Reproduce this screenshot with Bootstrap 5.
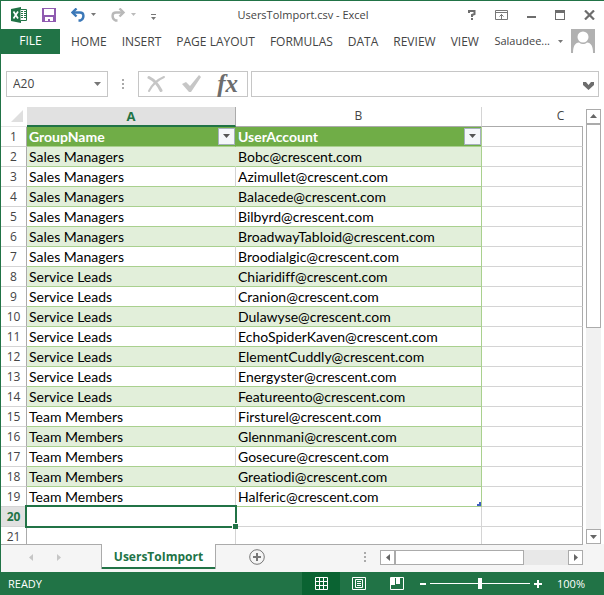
<!DOCTYPE html>
<html lang="en">
<head>
<meta charset="utf-8">
<meta name="viewport" content="width=device-width, initial-scale=1">
<title>UsersToImport.csv - Excel</title>
<link href="https://cdn.jsdelivr.net/npm/bootstrap@5.3.0/dist/css/bootstrap.min.css" rel="stylesheet">
<style>
:root { --xl: #217346; --line: #d4d4d4; --edge: #ababab; --ink: #444; --ui: "Open Sans", "Noto Sans", sans-serif; }
body { font-family: var(--ui); font-size: 12px; line-height: 16px; color: var(--ink); background: #fff; }
svg { display: block; flex: none; }
button { border: 0; padding: 0; background: transparent; color: inherit; font: inherit; }
.app { min-height: 100vh; height: 100vh; border-top: 1px solid var(--xl); border-left: 1px solid var(--xl); }
.titlebar { height: 28px; padding: 0 9px 0 10px; }
.titlebar .side { flex: 1 1 0; gap: 15px; }
.titlebar .window-tools { gap: 19px; }
.doc-title { font-size: 11px; padding-top: 1px; }
.menubar { height: 25px; padding-right: 9px; white-space: nowrap; }
.menubar a { color: var(--ink); text-decoration: none; }
.menubar .file { background: var(--xl); color: #fff; width: 59px; height: 25px; }
.menus { gap: 15px; padding: 1px 0 0 11px; }
.account { font-size: 11px; gap: 8px; }
.formula { height: 26px; margin: 17px 5px 10px; }
.boxed { border: 1px solid #c6c6c6; height: 26px; }
.name-box { width: 102px; padding-right: 6px; }
.name-box input { width: 80px; border: 0; padding: 0 0 0 6px; outline: 0; color: var(--ink); font-size: 12px; }
.fx-box { width: 110px; padding: 0 9px 0 8px; }
.fx-sign { font: italic 700 25px/22px "Liberation Serif", serif; color: #6d6d6d; }
.bar-box { margin-left: 3px; }
.bar-box input { border: 0; outline: 0; min-width: 0; }
.grip { width: 30px; }
.sheet-area { min-height: 0; }
.grid-wrap { overflow: hidden; min-width: 0; }
.sheet { table-layout: fixed; width: 100%; border-collapse: separate; border-spacing: 0; }
.sheet th, .sheet td { height: 20px; padding: 1px 2px 0; line-height: 18px; white-space: nowrap; font-weight: 400; border-right: 1px solid var(--line); border-bottom: 1px solid var(--line); }
.sheet .c-num { width: 26px; } .sheet .c-a { width: 209px; } .sheet .c-b { width: 246px; }
.sheet thead th { text-align: center; font-size: 12px; padding: 0; border-bottom-color: var(--edge); }
.sheet thead th:first-child { border-right: 0; border-bottom-color: #e6e6e6; }
.sheet thead .picked { background: #e1e1e1; color: var(--xl); font-weight: 700; font-size: 13px; border-bottom: 2px solid var(--xl); border-right-color: var(--edge); }
.sheet thead th:last-child { border-right: 0; padding-left: 56px; }
.sheet tbody th { text-align: center; border-right-color: var(--edge); padding: 1px 0 0; }
.sheet tbody td { font-family: Lato, "Open Sans", sans-serif; font-size: 14px; font-variant-ligatures: none; color: #000; }
.sheet tbody td:last-child { border-right-color: var(--edge); }
.listed td:nth-child(2), .listed td:nth-child(3) { border-bottom-color: #a9d08e; }
.listed td:nth-child(3) { border-right-color: #a9d08e; }
.listed:nth-child(even) td:nth-child(2), .listed:nth-child(even) td:nth-child(3) { background: #e2efda; }
.listed:nth-child(even) td:nth-child(2) { border-right-color: #e2efda; }
.sheet .listed.heads td:nth-child(2), .sheet .listed.heads td:nth-child(3) { background: #70ad47; color: #fff; font-weight: 700; padding-right: 0; }
.sheet .listed.heads td:nth-child(2) { border-right-color: #70ad47; }
.drop { width: 17px; height: 17px; border: 1px solid #a6b0bd; background: #f5f7fa; margin-bottom: 1px; }
.sheet .active-row th { background: #e1e1e1; color: var(--xl); font-weight: 700; }
.cell-cursor { position: absolute; inset: -2px -2px -2px -2px; border: 2px solid var(--xl); }
.cell-cursor::after { content: ""; position: absolute; right: -3px; bottom: -3px; width: 6px; height: 6px; background: var(--xl); border: solid #fff; border-width: 1px 0 0 1px; }
.table-end { position: absolute; right: 0; bottom: 0; }
.vscroll { width: 15px; margin: 2px 3px 0 3px; background: #f1f1f1; }
.sbtn { width: 15px; height: 15px; border: 1px solid var(--edge); background: #fff; display: flex; align-items: center; justify-content: center; flex: none; }
.vthumb { height: 47%; border: 1px solid var(--edge); background: #fff; }
.sheetbar { height: 28px; background: #f5f5f5; }
.sheetbar .lined { border-top: 1px solid var(--edge); margin-right: 21px; }
.sheet-nav { width: 100px; gap: 24px; padding: 0 40px 0 0; }
.sheet-tab { margin-top: -1px; width: 115px; height: 25px; background: #fff; border: solid var(--edge); border-width: 0 1px; color: var(--xl); font-weight: 700; box-shadow: inset 0 -2px var(--xl); }
.add-sheet { margin-left: 33px; }
.hscroll { width: 203px; height: 15px; background: #e8e8e8; margin-left: 14px; }
.hthumb { width: 129px; border: 1px solid var(--edge); background: #fff; }
.status { height: 23px; background: var(--xl); color: #fff; font-size: 11px; padding: 0 19px 0 7px; }
.view-btn { width: 38px; height: 23px; display: flex; align-items: center; justify-content: center; }
.view-btn.on { background: #0a6332; }
.zoom-range { appearance: none; -webkit-appearance: none; width: 100px; height: 13px; background: linear-gradient(#fff, #fff) center / 100% 1px no-repeat; margin: 0 4px; }
.zoom-range::-webkit-slider-thumb { -webkit-appearance: none; width: 4px; height: 11px; background: #fff; border-radius: 0; }
.zoom-value { margin-left: 15px; }
</style>
<script src="https://cdn.jsdelivr.net/npm/bootstrap@5.3.0/dist/js/bootstrap.bundle.min.js"></script>
</head>
<body>
<div class="app d-flex flex-column">
  <header class="titlebar d-flex align-items-center">
    <div class="side d-flex align-items-center">
      <svg width="16" height="16" viewBox="0 0 16 16"><path fill="#217346" d="M0 2l10-2v16L0 14z"/><path fill="#fff" stroke="#217346" d="M9.500 2.500h6v11h-6"/><path stroke="#217346" d="M10 4.500h2m1 0h2M10 6.500h2m1 0h2M10 8.500h2m1 0h2M10 10.500h2m1 0h2"/><path stroke="#fff" stroke-width="1.700" d="M2.500 4.500l4.500 7M7 4.500l-4.500 7"/></svg>
      <button aria-label="Save"><svg width="14" height="14" viewBox="0 0 14 14"><path fill="#8f5bb0" fill-rule="evenodd" d="M0 0h14v14H0zM2 1v6h10V1zM3 9v4h3v-2h2v2h3V9z"/></svg></button>
      <button aria-label="Undo"><svg width="25" height="14" viewBox="0 0 25 14" fill="none"><path stroke="#3b78b8" stroke-width="2.400" d="M1.500 4.500h7.500c4.500 0 4.500 6 .5 8H7.500"/><path stroke="#3b78b8" stroke-width="2.400" d="M5.500 .5l-4 4 4 4"/><path fill="#777" d="M20 5h5l-2.500 3z"/></svg></button>
      <button aria-label="Redo"><svg width="25" height="14" viewBox="0 0 25 14" fill="none"><path stroke="#b9b9b9" stroke-width="2.400" d="M12.500 4.500H5c-4.500 0-4.500 6-.5 8H6.500"/><path stroke="#b9b9b9" stroke-width="2.400" d="M8.500 .5l4 4-4 4"/><path fill="#bbb" d="M20 5h5l-2.500 3z"/></svg></button>
      <button class="pt-1" aria-label="Customize toolbar"><svg width="5" height="6" viewBox="0 0 5 6"><path fill="#777" d="M0 0h5v1H0zM0 3h5L2.500 6z"/></svg></button>
    </div>
    <div class="doc-title">UsersToImport.csv - Excel</div>
    <div class="side window-tools d-flex align-items-center justify-content-end">
      <button aria-label="Help"><svg width="8" height="10" viewBox="0 0 8 10" fill="none"><path stroke="#6d6d6d" stroke-width="2" d="M1 3V1h5.500v3L4 5v2"/><path fill="#6d6d6d" d="M3 8h2v2H3z"/></svg></button>
      <button aria-label="Ribbon display options"><svg width="13" height="10" viewBox="0 0 13 10" fill="none" stroke="#777"><path d="M.5 .5h12v9H.5zM1 2.500h11M6.500 9V4M4.500 6.500l2-2 2 2"/></svg></button>
      <button aria-label="Minimize"><svg width="9" height="10" viewBox="0 0 9 10"><path fill="#6d6d6d" d="M0 6h9v2H0z"/></svg></button>
      <button aria-label="Maximize"><svg width="10" height="10" viewBox="0 0 10 10"><path fill="#6d6d6d" fill-rule="evenodd" d="M0 0h10v10H0zM1 3v6h8V3z"/></svg></button>
      <button aria-label="Close"><svg width="11" height="10" viewBox="0 0 11 10"><path stroke="#6d6d6d" stroke-width="2.200" d="M1 .5l9 9M10 .5l-9 9"/></svg></button>
    </div>
  </header>

  <nav class="menubar d-flex align-items-center">
    <a class="file d-flex align-items-center justify-content-center" href="#">FILE</a>
    <div class="menus d-flex">
      <a href="#">HOME</a><a href="#">INSERT</a><a href="#">PAGE LAYOUT</a><a href="#">FORMULAS</a><a href="#">DATA</a><a href="#">REVIEW</a><a href="#">VIEW</a>
    </div>
    <a class="account d-flex align-items-center ms-auto" href="#">Salaudee...
      <svg width="5" height="3" viewBox="0 0 5 3"><path fill="#777" d="M0 0h5L2.500 3z"/></svg>
      <svg width="24" height="24" viewBox="0 0 24 24"><path fill="#b1b1b1" d="M0 0h24v24H0z"/><circle cx="12" cy="8" r="5.500" fill="#fff"/><path fill="#fff" d="M2 24c0-7 2-10 6-10.500 2.500 2 5.500 2 8 0 4 .5 6 3.500 6 10.500z"/></svg>
    </a>
  </nav>

  <div class="formula d-flex align-items-center">
    <div class="name-box boxed d-flex align-items-center justify-content-between">
      <input type="text" value="A20" aria-label="Name box">
      <button aria-label="Name list"><svg width="7" height="4" viewBox="0 0 7 4"><path fill="#777" d="M0 0h7L3.500 4z"/></svg></button>
    </div>
    <div class="grip d-flex justify-content-center"><svg width="2" height="10" viewBox="0 0 2 10"><path fill="#aaa" d="M0 0h2v2H0zM0 4h2v2H0zM0 8h2v2H0z"/></svg></div>
    <div class="fx-box boxed d-flex align-items-center justify-content-between">
      <button aria-label="Cancel"><svg width="19" height="18" viewBox="0 0 19 18" fill="none" stroke="#c6c6c6" stroke-linecap="round"><path stroke-width="3" d="M2 2.500c6 3 9 7 12 13"/><path stroke-width="2" d="M17 2C10 5 5 10 2 16"/></svg></button>
      <button aria-label="Enter"><svg width="20" height="17" viewBox="0 0 20 17"><path fill="#c6c6c6" d="M0 9l4-2 4 4L17 0l2 2L9 17H7z"/></svg></button>
      <button class="fx-sign" aria-label="Insert function">fx</button>
    </div>
    <div class="bar-box boxed d-flex align-items-center flex-fill pe-1">
      <input class="flex-fill" type="text" aria-label="Formula">
      <button class="pt-1" aria-label="Expand formula bar"><svg width="11" height="8" viewBox="0 0 11 8"><path fill="#6d6d6d" d="M0 0h3l2.500 3L8 0h3v3L5.500 8 0 3z"/></svg></button>
    </div>
  </div>

  <main class="sheet-area d-flex flex-fill">
    <div class="grid-wrap flex-fill">
      <table class="sheet">
        <colgroup><col class="c-num"><col class="c-a"><col class="c-b"><col></colgroup>
        <thead><tr>
          <th aria-label="Select all"><svg class="ms-auto me-1" width="12" height="12" viewBox="0 0 12 12"><path fill="#dfdfdf" d="M12 0v12H0z"/></svg></th>
          <th class="picked">A</th><th>B</th><th>C</th>
        </tr></thead>
        <tbody>
          <tr class="listed heads"><th>1</th>
            <td><div class="d-flex justify-content-between align-items-center">GroupName<button class="drop d-flex align-items-center justify-content-center" aria-label="Filter GroupName"><svg width="7" height="4" viewBox="0 0 7 4"><path fill="#555" d="M0 0h7L3.500 4z"/></svg></button></div></td>
            <td><div class="d-flex justify-content-between align-items-center">UserAccount<button class="drop d-flex align-items-center justify-content-center" aria-label="Filter UserAccount"><svg width="7" height="4" viewBox="0 0 7 4"><path fill="#555" d="M0 0h7L3.500 4z"/></svg></button></div></td><td></td></tr>
          <tr class="listed"><th>2</th><td>Sales Managers</td><td>Bobc@crescent.com</td><td></td></tr>
          <tr class="listed"><th>3</th><td>Sales Managers</td><td>Azimullet@crescent.com</td><td></td></tr>
          <tr class="listed"><th>4</th><td>Sales Managers</td><td>Balacede@crescent.com</td><td></td></tr>
          <tr class="listed"><th>5</th><td>Sales Managers</td><td>Bilbyrd@crescent.com</td><td></td></tr>
          <tr class="listed"><th>6</th><td>Sales Managers</td><td>BroadwayTabloid@crescent.com</td><td></td></tr>
          <tr class="listed"><th>7</th><td>Sales Managers</td><td>Broodialgic@crescent.com</td><td></td></tr>
          <tr class="listed"><th>8</th><td>Service Leads</td><td>Chiaridiff@crescent.com</td><td></td></tr>
          <tr class="listed"><th>9</th><td>Service Leads</td><td>Cranion@crescent.com</td><td></td></tr>
          <tr class="listed"><th>10</th><td>Service Leads</td><td>Dulawyse@crescent.com</td><td></td></tr>
          <tr class="listed"><th>11</th><td>Service Leads</td><td>EchoSpiderKaven@crescent.com</td><td></td></tr>
          <tr class="listed"><th>12</th><td>Service Leads</td><td>ElementCuddly@crescent.com</td><td></td></tr>
          <tr class="listed"><th>13</th><td>Service Leads</td><td>Energyster@crescent.com</td><td></td></tr>
          <tr class="listed"><th>14</th><td>Service Leads</td><td>Featureento@crescent.com</td><td></td></tr>
          <tr class="listed"><th>15</th><td>Team Members</td><td>Firsturel@crescent.com</td><td></td></tr>
          <tr class="listed"><th>16</th><td>Team Members</td><td>Glennmani@crescent.com</td><td></td></tr>
          <tr class="listed"><th>17</th><td>Team Members</td><td>Gosecure@crescent.com</td><td></td></tr>
          <tr class="listed"><th>18</th><td>Team Members</td><td>Greatiodi@crescent.com</td><td></td></tr>
          <tr class="listed"><th>19</th><td>Team Members</td><td class="position-relative">Halferic@crescent.com<svg class="table-end" width="4" height="4" viewBox="0 0 4 4"><path fill="#3f5fbf" d="M2 0h2v4H0V2h2z"/></svg></td><td></td></tr>
          <tr class="active-row"><th>20</th><td class="position-relative"><div class="cell-cursor"></div></td><td></td><td></td></tr>
          <tr><th>21</th><td></td><td></td><td></td></tr>
        </tbody>
      </table>
    </div>
    <div class="vscroll d-flex flex-column">
      <button class="sbtn" aria-label="Scroll up"><svg width="7" height="4" viewBox="0 0 7 4"><path fill="#666" d="M0 4h7L3.500 0z"/></svg></button>
      <div class="vthumb"></div>
      <button class="sbtn mt-auto" aria-label="Scroll down"><svg width="7" height="4" viewBox="0 0 7 4"><path fill="#666" d="M0 0h7L3.500 4z"/></svg></button>
    </div>
  </main>

  <div class="sheetbar">
    <div class="lined d-flex align-items-start">
      <div class="sheet-nav d-flex align-items-center justify-content-end align-self-center">
        <button aria-label="Previous sheet"><svg width="4" height="7" viewBox="0 0 4 7"><path fill="#c6c6c6" d="M4 0v7L0 3.500z"/></svg></button>
        <button aria-label="Next sheet"><svg width="4" height="7" viewBox="0 0 4 7"><path fill="#c6c6c6" d="M0 0v7l4-3.500z"/></svg></button>
      </div>
      <button class="sheet-tab">UsersToImport</button>
      <button class="add-sheet align-self-center" aria-label="New sheet"><svg width="16" height="16" viewBox="0 0 16 16" fill="none" stroke="#777"><circle cx="8" cy="8" r="7.300"/><path stroke-width="2" d="M8 4v8M4 8h8"/></svg></button>
      <svg class="ms-auto align-self-center" width="2" height="10" viewBox="0 0 2 10"><path fill="#aaa" d="M0 0h2v2H0zM0 4h2v2H0zM0 8h2v2H0z"/></svg>
      <div class="hscroll d-flex align-self-center">
        <button class="sbtn" aria-label="Scroll left"><svg width="4" height="7" viewBox="0 0 4 7"><path fill="#666" d="M4 0v7L0 3.500z"/></svg></button>
        <div class="hthumb"></div>
        <button class="sbtn ms-auto" aria-label="Scroll right"><svg width="4" height="7" viewBox="0 0 4 7"><path fill="#666" d="M0 0v7l4-3.500z"/></svg></button>
      </div>
    </div>
  </div>

  <footer class="status d-flex align-items-center">
    <span>READY</span>
    <button class="view-btn on ms-auto" aria-label="Normal view"><svg width="13" height="13" viewBox="0 0 13 13" fill="none" stroke="#fff"><path d="M.5 .5h12v12H.5zM4.500 0v13M8.500 0v13M0 4.500h13M0 8.500h13"/></svg></button>
    <button class="view-btn" aria-label="Page layout view"><svg width="14" height="13" viewBox="0 0 14 13" fill="none" stroke="#fff"><path d="M.5 .5h13v12H.5zM3.500 2.500h7v8h-7zM5 4.500h4M5 6.500h4M5 8.500h4"/></svg></button>
    <button class="view-btn" aria-label="Page break preview"><svg width="14" height="13" viewBox="0 0 14 13"><path fill="none" stroke="#fff" d="M.5 .5h13v12H.5z"/><path fill="#fff" d="M1 1h4v7H1zM6 1h4v6H6z"/></svg></button>
    <button class="ms-1" aria-label="Zoom out"><svg width="6" height="8" viewBox="0 0 6 8"><path fill="#fff" d="M0 3h6v2H0z"/></svg></button>
    <input class="zoom-range" type="range" min="0" max="200" value="100" aria-label="Zoom">
    <button aria-label="Zoom in"><svg width="8" height="8" viewBox="0 0 8 8"><path fill="#fff" d="M3 0h2v3h3v2H5v3H3V5H0V3h3z"/></svg></button>
    <span class="zoom-value">100%</span>
  </footer>
</div>
</body>
</html>
